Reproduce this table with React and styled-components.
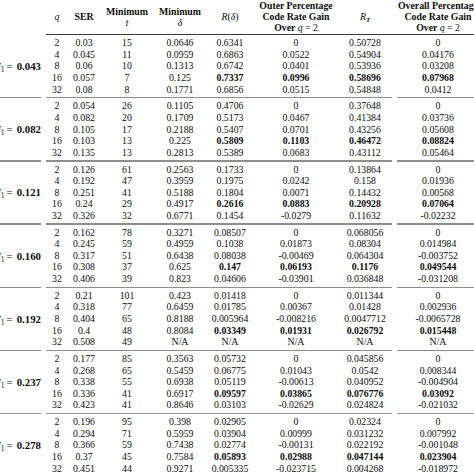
import React from "react";
import styled, { createGlobalStyle } from "styled-components";

const GlobalStyle = createGlobalStyle`
  html, body { margin: 0; padding: 0; background: #fff; overflow: hidden; }
`;

const Frame = styled.div`
  width: 474px;
  height: 474px;
  overflow: hidden;
  background: #fff;
`;

const Table = styled.table`
  margin: -1px 0 0 -6px;
  border-collapse: collapse;
  table-layout: fixed;
  width: 488px;
  font-family: "Liberation Serif", "Times New Roman", serif;
  font-size: 9.8px;
  color: #0e0e0e;
`;

const HeadCell = styled.th`
  padding: 0;
  height: 35px;
  line-height: 11px;
  vertical-align: middle;
  text-align: center;
  font-weight: bold;
  white-space: nowrap;
`;

const Cell = styled.td`
  padding: 0;
  height: 11.6px;
  line-height: 11.6px;
  text-align: center;
  white-space: nowrap;
  font-weight: ${(p) => (p.$bold ? "bold" : "normal")};
`;

const LabelCell = styled.td`
  padding: 0 3px 0 0;
  text-align: right;
  vertical-align: middle;
  white-space: nowrap;
  font-size: 10.8px;
`;

const Eq = styled.span`
  display: inline-block;
  margin: 0 4px 0 2px;
`;

const Var = styled.span`
  font-style: italic;
  font-weight: normal;
`;

const Plain = styled.span`
  font-weight: normal;
`;

const Sub = styled.sub`
  font-size: 0.7em;
  line-height: 0;
  vertical-align: -0.25em;
  font-style: ${(p) => (p.$italic ? "italic" : "normal")};
`;

const RuleCell = styled.td`
  padding: 0;
  height: ${(p) => p.$h}px;
  vertical-align: ${(p) => (p.$top ? "top" : "middle")};
`;

const Line = styled.div`
  height: ${(p) => p.$thick}px;
  background: ${(p) => p.$color};
  margin-left: ${(p) => p.$left || 0}px;
  margin-right: ${(p) => p.$right || 0}px;
`;

const groups = [
  {
    label: "0.043",
    rows: [
      ["2", "0.03", "15", "0.0646", "0.6341", "0", "0.50728", "0"],
      ["4", "0.045", "11", "0.0959", "0.6863", "0.0522", "0.54904", "0.04176"],
      ["8", "0.06", "10", "0.1313", "0.6742", "0.0401", "0.53936", "0.03208"],
      ["16", "0.057", "7", "0.125", "0.7337", "0.0996", "0.58696", "0.07968"],
      ["32", "0.08", "8", "0.1771", "0.6856", "0.0515", "0.54848", "0.0412"],
    ],
  },
  {
    label: "0.082",
    rows: [
      ["2", "0.054", "26", "0.1105", "0.4706", "0", "0.37648", "0"],
      ["4", "0.082", "20", "0.1709", "0.5173", "0.0467", "0.41384", "0.03736"],
      ["8", "0.105", "17", "0.2188", "0.5407", "0.0701", "0.43256", "0.05608"],
      ["16", "0.103", "13", "0.225", "0.5809", "0.1103", "0.46472", "0.08824"],
      ["32", "0.135", "13", "0.2813", "0.5389", "0.0683", "0.43112", "0.05464"],
    ],
  },
  {
    label: "0.121",
    rows: [
      ["2", "0.126", "61", "0.2563", "0.1733", "0", "0.13864", "0"],
      ["4", "0.192", "47", "0.3959", "0.1975", "0.0242", "0.158", "0.01936"],
      ["8", "0.251", "41", "0.5188", "0.1804", "0.0071", "0.14432", "0.00568"],
      ["16", "0.24", "29", "0.4917", "0.2616", "0.0883", "0.20928", "0.07064"],
      ["32", "0.326", "32", "0.6771", "0.1454", "-0.0279", "0.11632", "-0.02232"],
    ],
  },
  {
    label: "0.160",
    rows: [
      ["2", "0.162", "78", "0.3271", "0.08507", "0", "0.068056", "0"],
      ["4", "0.245", "59", "0.4959", "0.1038", "0.01873", "0.08304", "0.014984"],
      ["8", "0.317", "51", "0.6438", "0.08038", "-0.00469", "0.064304", "-0.003752"],
      ["16", "0.308", "37", "0.625", "0.147", "0.06193", "0.1176", "0.049544"],
      ["32", "0.406", "39", "0.823", "0.04606", "-0.03901", "0.036848", "-0.031208"],
    ],
  },
  {
    label: "0.192",
    rows: [
      ["2", "0.21", "101", "0.423", "0.01418", "0", "0.011344", "0"],
      ["4", "0.318", "77", "0.6459", "0.01785", "0.00367", "0.01428", "0.002936"],
      ["8", "0.404", "65", "0.8188", "0.005964", "-0.008216", "0.0047712", "-0.0065728"],
      ["16", "0.4", "48", "0.8084", "0.03349", "0.01931", "0.026792", "0.015448"],
      ["32", "0.508", "49", "N/A", "N/A", "N/A", "N/A", "N/A"],
    ],
  },
  {
    label: "0.237",
    rows: [
      ["2", "0.177", "85", "0.3563", "0.05732", "0", "0.045856", "0"],
      ["4", "0.268", "65", "0.5459", "0.06775", "0.01043", "0.0542", "0.008344"],
      ["8", "0.338", "55", "0.6938", "0.05119", "-0.00613", "0.040952", "-0.004904"],
      ["16", "0.336", "41", "0.6917", "0.09597", "0.03865", "0.076776", "0.03092"],
      ["32", "0.423", "41", "0.8646", "0.03103", "-0.02629", "0.024824", "-0.021032"],
    ],
  },
  {
    label: "0.278",
    rows: [
      ["2", "0.196", "95", "0.398", "0.02905", "0", "0.02324", "0"],
      ["4", "0.294", "71", "0.5959", "0.03904", "0.00999", "0.031232", "0.007992"],
      ["8", "0.366", "59", "0.7438", "0.02774", "-0.00131", "0.022192", "-0.001048"],
      ["16", "0.37", "45", "0.7584", "0.05893", "0.02988", "0.047144", "0.023904"],
      ["32", "0.451", "44", "0.9271", "0.005335", "-0.023715", "0.004268", "-0.018972"],
    ],
  },
];

const widths = [50, 26, 28, 58, 48, 52, 80, 58, 88];

const OverQ = () => (
  <>
    Over <Var>q</Var> <Plain>= 2</Plain>
  </>
);

function Separator() {
  return (
    <tr>
      <RuleCell $h={5.2}>
        <Line $thick={1.4} $color="#8e8e8e" $right={3} />
      </RuleCell>
      <RuleCell $h={5.2} colSpan={7}>
        <Line $thick={1.4} $color="#8e8e8e" $left={2} $right={2} />
      </RuleCell>
      <RuleCell $h={5.2}>
        <Line $thick={1.4} $color="#8e8e8e" $left={3} />
      </RuleCell>
    </tr>
  );
}

export default function App() {
  return (
    <Frame>
      <GlobalStyle />
      <Table>
        <colgroup>
          {widths.map((w, i) => (
            <col key={i} style={{ width: w }} />
          ))}
        </colgroup>
        <thead>
          <tr>
            <HeadCell />
            <HeadCell>
              <Var>q</Var>
            </HeadCell>
            <HeadCell>SER</HeadCell>
            <HeadCell>
              Minimum
              <br />
              <Var>t</Var>
            </HeadCell>
            <HeadCell>
              Minimum
              <br />
              <Var>δ</Var>
            </HeadCell>
            <HeadCell>
              <Var>R</Var>
              <Plain>(</Plain>
              <Var>δ</Var>
              <Plain>)</Plain>
            </HeadCell>
            <HeadCell>
              Outer Percentage
              <br />
              Code Rate Gain
              <br />
              <OverQ />
            </HeadCell>
            <HeadCell>
              <Var>R</Var>
              <Sub $italic>T</Sub>
            </HeadCell>
            <HeadCell>
              Overall Percentage
              <br />
              Code Rate Gain
              <br />
              <OverQ />
            </HeadCell>
          </tr>
          <tr>
            <RuleCell $h={3.2} $top />
            <RuleCell $h={3.2} $top colSpan={8}>
              <Line $thick={1.2} $color="#3a3a3a" $left={2} />
            </RuleCell>
          </tr>
        </thead>
        <tbody>
          {groups.map((g, gi) => (
            <React.Fragment key={g.label}>
              {gi > 0 && <Separator />}
              {g.rows.map((r, ri) => (
                <tr key={ri}>
                  {ri === 0 && (
                    <LabelCell rowSpan={5}>
                      <Var>I</Var>
                      <Sub>1</Sub>
                      <Eq>=</Eq>
                      <b>{g.label}</b>
                    </LabelCell>
                  )}
                  {r.map((v, ci) => (
                    <Cell key={ci} $bold={r[0] === "16" && ci >= 4}>
                      {v}
                    </Cell>
                  ))}
                </tr>
              ))}
            </React.Fragment>
          ))}
        </tbody>
      </Table>
    </Frame>
  );
}
